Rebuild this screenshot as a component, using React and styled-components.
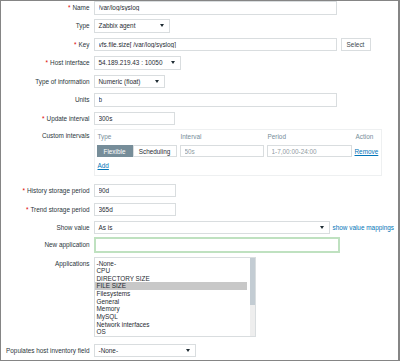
import React from 'react';
import styled, { createGlobalStyle } from 'styled-components';

const apps = [
  '-None-',
  'CPU',
  'DIRECTORY SIZE',
  'FILE SIZE',
  'Filesystems',
  'General',
  'Memory',
  'MySQL',
  'Network interfaces',
  'OS',
];

const Arrow = () => (
  <svg width="4" height="3" viewBox="0 0 4 3">
    <path d="M0 0 L4 0 L2 3 Z" fill="#1f2c33" />
  </svg>
);

const Select = ({ width, children }) => (
  <SelectBox $w={width}>
    <span>{children}</span>
    <Arrow />
  </SelectBox>
);

const App = () => {
  return (
    <>
      <GlobalStyle />
      <Frame>
        <Row $mt={0}>
          <Label><Req>*</Req>Name</Label>
          <Input $w={243} readOnly value="/var/log/syslog" />
        </Row>
        <Row $mt={4.5}>
          <Label>Type</Label>
          <Select width={76}>Zabbix agent</Select>
        </Row>
        <Row>
          <Label><Req>*</Req>Key</Label>
          <Input $w={243} readOnly value="vfs.file.size[ /var/log/syslog]" />
          <Button>Select</Button>
        </Row>
        <Row>
          <Label><Req>*</Req>Host interface</Label>
          <Select width={87}>54.189.219.43 : 10050</Select>
        </Row>
        <Row>
          <Label>Type of information</Label>
          <Select width={71}>Numeric (float)</Select>
        </Row>
        <Row>
          <Label>Units</Label>
          <Input $w={243} readOnly value="b" />
        </Row>
        <Row>
          <Label><Req>*</Req>Update interval</Label>
          <Input $w={81} readOnly value="300s" />
        </Row>
        <Row $mt={4} $top>
          <Label $pt={3}>Custom intervals</Label>
          <IntervalBox>
            <IntervalGrid>
              <Head>Type</Head>
              <Head>Interval</Head>
              <Head>Period</Head>
              <Head>Action</Head>
            </IntervalGrid>
            <IntervalGrid $mt={4}>
              <Segmented>
                <Segment $active $w={36}>Flexible</Segment>
                <Segment $w={44}>Scheduling</Segment>
              </Segmented>
              <Input $w={84} $h={12} $muted readOnly value="50s" />
              <Input $w={85} $h={12} $muted readOnly value="1-7,00:00-24:00" />
              <Link $underline>Remove</Link>
            </IntervalGrid>
            <AddRow>
              <Link $underline>Add</Link>
            </AddRow>
          </IntervalBox>
        </Row>
        <Row $mt={7.5}>
          <Label><Req>*</Req>History storage period</Label>
          <Input $w={82} readOnly value="90d" />
        </Row>
        <Row $mt={5.5}>
          <Label><Req>*</Req>Trend storage period</Label>
          <Input $w={82} readOnly value="365d" />
        </Row>
        <Row $mt={4.5}>
          <Label>Show value</Label>
          <Select width={236}>As is</Select>
          <Link $ml={3}>show value mappings</Link>
        </Row>
        <Row $mt={2.5}>
          <Label>New application</Label>
          <GreenInput readOnly value="" />
        </Row>
        <Row $mt={4} $top>
          <Label $pt={3}>Applications</Label>
          <ListBox>
            <ListItems>
              {apps.map(a => (
                <ListItem key={a} $selected={a === 'FILE SIZE'}>{a}</ListItem>
              ))}
            </ListItems>
            <ScrollTrack>
              <ScrollThumb />
            </ScrollTrack>
          </ListBox>
        </Row>
        <Row $mt={7}>
          <Label>Populates host inventory field</Label>
          <Select width={102}>-None-</Select>
        </Row>
      </Frame>
    </>
  );
};

export default App;

const GlobalStyle = createGlobalStyle`
  html, body {
    margin: 0;
    padding: 0;
    background: #fff;
  }
  body {
    font-family: "Liberation Sans", Arial, sans-serif;
    font-size: 6.4px;
    color: #1f2c33;
  }
`;

const Frame = styled.div`
  width: 400px;
  height: 361px;
  box-sizing: border-box;
  border: 1.5px solid #858585;
  border-right-width: 2px;
  display: flex;
  flex-direction: column;
  overflow: hidden;
`;

const Row = styled.div`
  display: flex;
  align-items: ${p => (p.$top ? 'flex-start' : 'center')};
  margin-top: ${p => (p.$mt ?? 5)}px;
`;

const Label = styled.div`
  width: 88.5px;
  margin-right: 4px;
  flex-shrink: 0;
  text-align: right;
  white-space: nowrap;
  color: #2b363c;
  padding-top: ${p => p.$pt || 0}px;
`;

const Req = styled.span`
  color: #dc0000;
  margin-right: 2px;
`;

const Input = styled.input`
  box-sizing: border-box;
  width: ${p => p.$w}px;
  height: ${p => p.$h || 13.5}px;
  margin: 0;
  padding: 0 4px;
  border: 1px solid #d9dddf;
  border-radius: 0;
  background: #fff;
  font: inherit;
  color: ${p => (p.$muted ? '#8f9ba1' : '#1f2c33')};
  outline: none;
`;

const GreenInput = styled.input`
  box-sizing: border-box;
  width: 246px;
  height: 16px;
  margin: 0;
  padding: 0 4px;
  border: 2px solid #bfe1c0;
  background: #fff;
  font: inherit;
  outline: none;
`;

const SelectBox = styled.div`
  box-sizing: border-box;
  width: ${p => p.$w}px;
  height: 13.5px;
  padding: 0 5px 0 4px;
  border: 1px solid #d9dddf;
  background: #fff;
  display: flex;
  align-items: center;
  justify-content: space-between;
  white-space: nowrap;
`;

const Button = styled.div`
  box-sizing: border-box;
  width: 30px;
  height: 13.5px;
  margin-left: 4px;
  border: 1px solid #d9dddf;
  background: #fff;
  display: flex;
  align-items: center;
  justify-content: center;
  color: #3c474d;
`;

const Link = styled.span`
  color: #0275b8;
  white-space: nowrap;
  margin-left: ${p => p.$ml || 0}px;
  text-decoration: ${p => (p.$underline ? 'underline' : 'none')};
  text-underline-offset: 1px;
`;

const IntervalBox = styled.div`
  box-sizing: border-box;
  width: 288px;
  height: 47px;
  border: 1px solid #eef0f1;
  padding: 3px 2px 0;
`;

const IntervalGrid = styled.div`
  display: grid;
  grid-template-columns: 80px 84px 85px auto;
  column-gap: 3px;
  align-items: center;
  margin-top: ${p => p.$mt || 0}px;
`;

const Head = styled.div`
  line-height: 8px;
  color: #768d99;
  padding-left: 1px;
`;

const Segmented = styled.div`
  display: flex;
  height: 12px;
`;

const Segment = styled.div`
  box-sizing: border-box;
  width: ${p => p.$w}px;
  height: 12px;
  display: flex;
  align-items: center;
  justify-content: center;
  border: 1px solid ${p => (p.$active ? '#768d99' : '#d9dddf')};
  background: ${p => (p.$active ? '#768d99' : '#fff')};
  color: ${p => (p.$active ? '#fff' : '#1f2c33')};
`;

const AddRow = styled.div`
  margin-top: 5px;
  line-height: 8px;
  padding-left: 1px;
`;

const ListBox = styled.div`
  box-sizing: border-box;
  width: 162px;
  height: 80px;
  border: 1px solid #d9dddf;
  display: flex;
  overflow: hidden;
`;

const ListItems = styled.div`
  flex: 1;
  padding-top: 2px;
  margin-right: 2.5px;
  overflow: hidden;
`;

const ListItem = styled.div`
  height: 7.67px;
  line-height: 7.67px;
  padding-left: 2px;
  white-space: nowrap;
  color: #1f2c33;
  background: ${p => (p.$selected ? '#c8c8c8' : 'transparent')};
`;

const ScrollTrack = styled.div`
  width: 5px;
  background: #eeeeee;
  display: flex;
  flex-direction: column;
`;

const ScrollThumb = styled.div`
  height: 47px;
  background: #c3ccd3;
`;
